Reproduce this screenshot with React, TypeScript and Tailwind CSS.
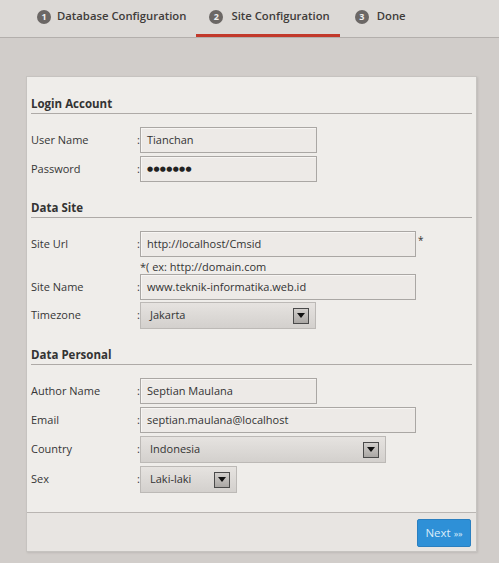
import type { FC, ReactNode } from 'react';

const Heading: FC<{ title: string; first?: boolean }> = ({ title, first }) => (
  <div
    className={`${first ? 'mt-[18px]' : 'mt-[17px]'} border-b border-[#aeaaa7] pb-[1px] text-[11.5px] font-bold leading-[17px] text-[#333]`}
  >
    {title}
  </div>
);

const Row: FC<{ label: string; children: ReactNode; className?: string }> = ({ label, children, className }) => (
  <div className={`flex items-center ${className ?? ''}`}>
    <span className="w-[106px] text-[11px] text-[#363636]">{label}</span>
    <span className="w-[3px] text-[11px] text-[#363636]">:</span>
    {children}
  </div>
);

const Input: FC<{ value: string; width: string; password?: boolean }> = ({ value, width, password }) => (
  <div
    className={`${width} flex h-[26px] items-center border border-[#aaa7a4] bg-[#edeae7] pl-[6px] text-[11px] text-[#333] shadow-[inset_1px_1px_0_#f7f5f3]`}
  >
    {password ? <span className="text-[7px] tracking-[0.3px] text-[#222]">●●●●●●●</span> : value}
  </div>
);

const Select: FC<{ value: string; width: string }> = ({ value, width }) => (
  <div
    className={`${width} flex h-[27px] items-center justify-between border border-[#bcb9b6] bg-gradient-to-b from-[#e6e3e0] to-[#d3d0cd] pl-[9px] pr-[6px] text-[11px] text-[#333]`}
  >
    <span>{value}</span>
    <span className="flex h-[16px] w-[16px] items-center justify-center border border-[#4a4a4a] bg-gradient-to-b from-[#d2cfcc] to-[#aaa7a4]">
      <svg width="8" height="5" viewBox="0 0 8 5">
        <path d="M0 0 L8 0 L4 5 Z" fill="#111" />
      </svg>
    </span>
  </div>
);

const StepBadge: FC<{ n: number }> = ({ n }) => (
  <span className="flex h-[14px] w-[14px] items-center justify-center rounded-full bg-[#6b6765] text-[9px] font-bold leading-none text-[#eeeeee]">
    {n}
  </span>
);

const App: FC = () => {
  return (
    <div
      className="h-[563px] w-[499px] overflow-hidden bg-[#d1cdca]"
      style={{ fontFamily: '"Open Sans", "DejaVu Sans", sans-serif' }}
    >
      <div className="flex h-[38px] items-stretch border-b border-[#b3afac] bg-[#dcd9d6] pl-[37px] text-[11.3px] font-semibold text-[#3f3c3a]">
        <div className="flex items-center gap-[6px] pb-[4px]">
          <StepBadge n={1} />
          <span>Database Configuration</span>
        </div>
        <div className="ml-[10px] flex items-center gap-[8px] border-b-[3px] border-[#c2392b] pb-[1px] pl-[13px] pr-[10px]">
          <StepBadge n={2} />
          <span>Site Configuration</span>
        </div>
        <div className="ml-[15px] flex items-center gap-[8px] pb-[4px]">
          <StepBadge n={3} />
          <span>Done</span>
        </div>
      </div>

      <div className="pt-[38px]">
        <div className="ml-[26px] w-[451px] border border-[#c6c3c0] bg-[#efedea] shadow-[1px_1px_2px_#bdb9b6]">
          <div className="px-[4px] pb-[19px]">
            <Heading title="Login Account" first />
            <div className="mt-[13px] flex flex-col gap-[3px]">
              <Row label="User Name">
                <Input value="Tianchan" width="w-[177px]" />
              </Row>
              <Row label="Password">
                <Input value="" width="w-[177px]" password />
              </Row>
            </div>

            <Heading title="Data Site" />
            <div className="mt-[13px] flex flex-col">
              <Row label="Site Url">
                <Input value="http://localhost/Cmsid" width="w-[276px]" />
                <span className="ml-[2px] self-start pt-[2px] text-[10px] text-[#333]">*</span>
              </Row>
              <div className="h-[17px] pl-[109px] pt-[2px] text-[11px] leading-[15px] text-[#333]">
                *( ex: http://domain.com
              </div>
              <Row label="Site Name">
                <Input value="www.teknik-informatika.web.id" width="w-[276px]" />
              </Row>
              <Row label="Timezone" className="mt-[2px]">
                <Select value="Jakarta" width="w-[176px]" />
              </Row>
            </div>

            <Heading title="Data Personal" />
            <div className="mt-[13px] flex flex-col gap-[3px]">
              <Row label="Author Name">
                <Input value="Septian Maulana" width="w-[177px]" />
              </Row>
              <Row label="Email">
                <Input value="septian.maulana@localhost" width="w-[276px]" />
              </Row>
              <Row label="Country">
                <Select value="Indonesia" width="w-[246px]" />
              </Row>
              <Row label="Sex">
                <Select value="Laki-laki" width="w-[97px]" />
              </Row>
            </div>
          </div>

          <div className="flex h-[39px] items-center justify-end border-t border-[#b9b5b2] bg-[#e8e5e2] pr-[5px]">
            <button className="mt-[2px] h-[28px] w-[54px] rounded-[2px] border border-[#2a7fc0] bg-[#2e90d7] text-[11.5px] text-[#d9ecfa]">
              Next <span className="text-[9px]">»»</span>
            </button>
          </div>
        </div>
      </div>
    </div>
  );
};

export default App;
